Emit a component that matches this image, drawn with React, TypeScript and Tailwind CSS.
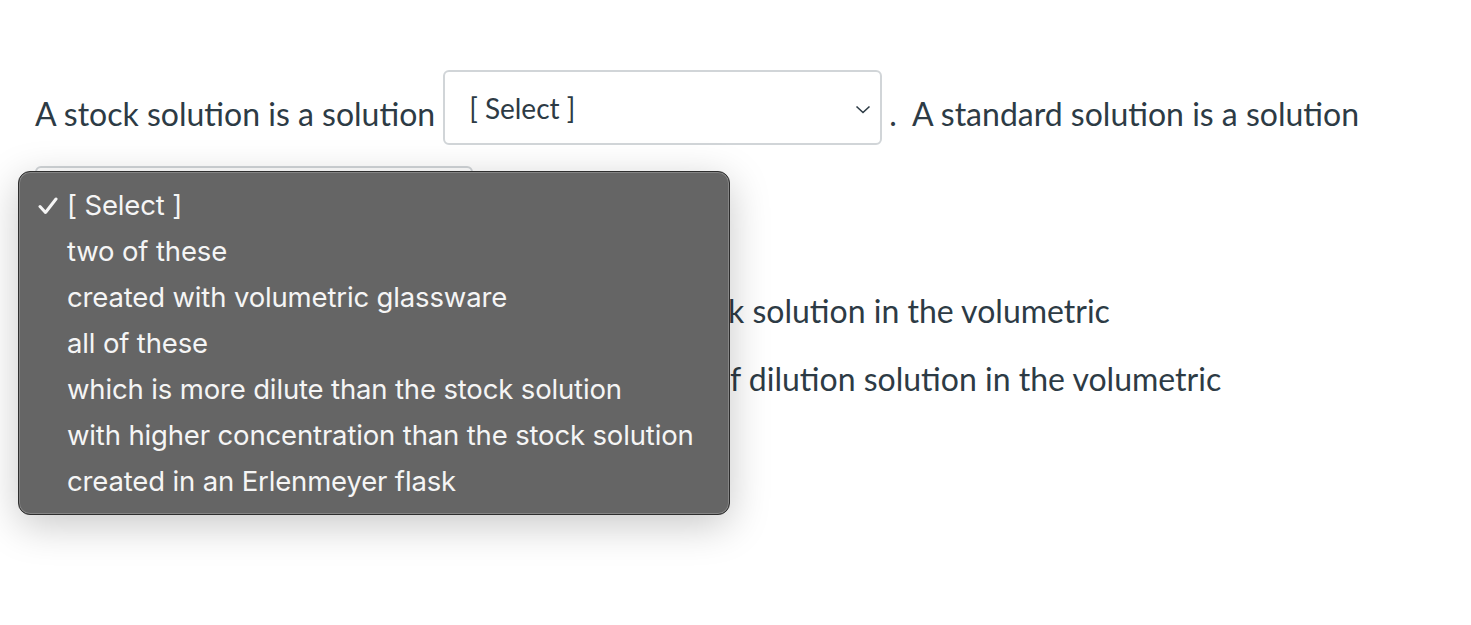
import React from 'react'

const options = [
  '[ Select ]',
  'two of these',
  'created with volumetric glassware',
  'all of these',
  'which is more dilute than the stock solution',
  'with higher concentration than the stock solution',
  'created in an Erlenmeyer flask',
]

const SelectBox = ({ width }: { width: string }) => (
  <div
    className={`relative flex h-[75px] ${width} shrink-0 items-center rounded-[6px] border-2 border-[#d1d5d8] bg-white pl-[24px]`}
  >
    <span className="mt-[1px] text-[28px] text-[#2d3b45]">[ Select ]</span>
    <svg
      className="absolute right-[9px] top-[33px]"
      width="16"
      height="10"
      viewBox="0 0 16 10"
      fill="none"
    >
      <path d="M1.5 1.5 L8 7.5 L14.5 1.5" stroke="#2d3b45" strokeWidth="1.6" />
    </svg>
  </div>
)

const App = () => {
  return (
    <div className="relative h-[625px] w-full overflow-hidden bg-white font-['Lato',sans-serif] text-[32px] text-[#2d3b45]">
      <div className="pl-[35px] pt-[70px]">
        {/* line one */}
        <div className="flex h-[75px] items-center">
          <span className="mt-[12px]">A stock solution is a solution</span>
          <div className="ml-[8px]">
            <SelectBox width="w-[439px]" />
          </div>
          <span className="ml-[7px] mt-[12px] whitespace-pre">.  A standard solution is a solution</span>
        </div>

        {/* line two */}
        <div className="mt-[21px] flex h-[75px] items-center">
          <SelectBox width="w-[438px]" />
          <span className="ml-[7px]">.</span>
        </div>

        {/* text hidden under the popup */}
        <div className="mt-[36px] leading-[68px]">
          <div className="flex whitespace-nowrap">
            <span className="w-[693px] overflow-hidden">To prepare it, measure a volume of the stoc</span>
            <span>k solution in the volumetric</span>
          </div>
          <div className="flex whitespace-nowrap">
            <span className="w-[695px] overflow-hidden">flask and then add the right amount o</span>
            <span>f dilution solution in the volumetric</span>
          </div>
        </div>
      </div>

      {/* native popup menu */}
      <div className="absolute left-[18px] top-[171px] w-[712px] rounded-[12px] border border-[#2e2e2e] bg-[#656565] pb-[9px] pt-[11px] font-['Inter',sans-serif] text-[27.5px] text-[#f5f5f5] shadow-[0_10px_40px_rgba(0,0,0,0.22)] ring-1 ring-inset ring-[#858585]">
        {options.map((o, i) => (
          <div key={o} className="relative flex h-[46px] items-center pl-[48px] tracking-[-0.15px]">
            {i === 0 && (
              <svg className="absolute left-[19px] top-[14px]" width="20" height="18" viewBox="0 0 20 18" fill="none">
                <path d="M2 9.5 L7.5 15.5 L18 2" stroke="#f5f5f5" strokeWidth="3" strokeLinecap="round" strokeLinejoin="round" />
              </svg>
            )}
            {o}
          </div>
        ))}
      </div>
    </div>
  )
}

export default App
